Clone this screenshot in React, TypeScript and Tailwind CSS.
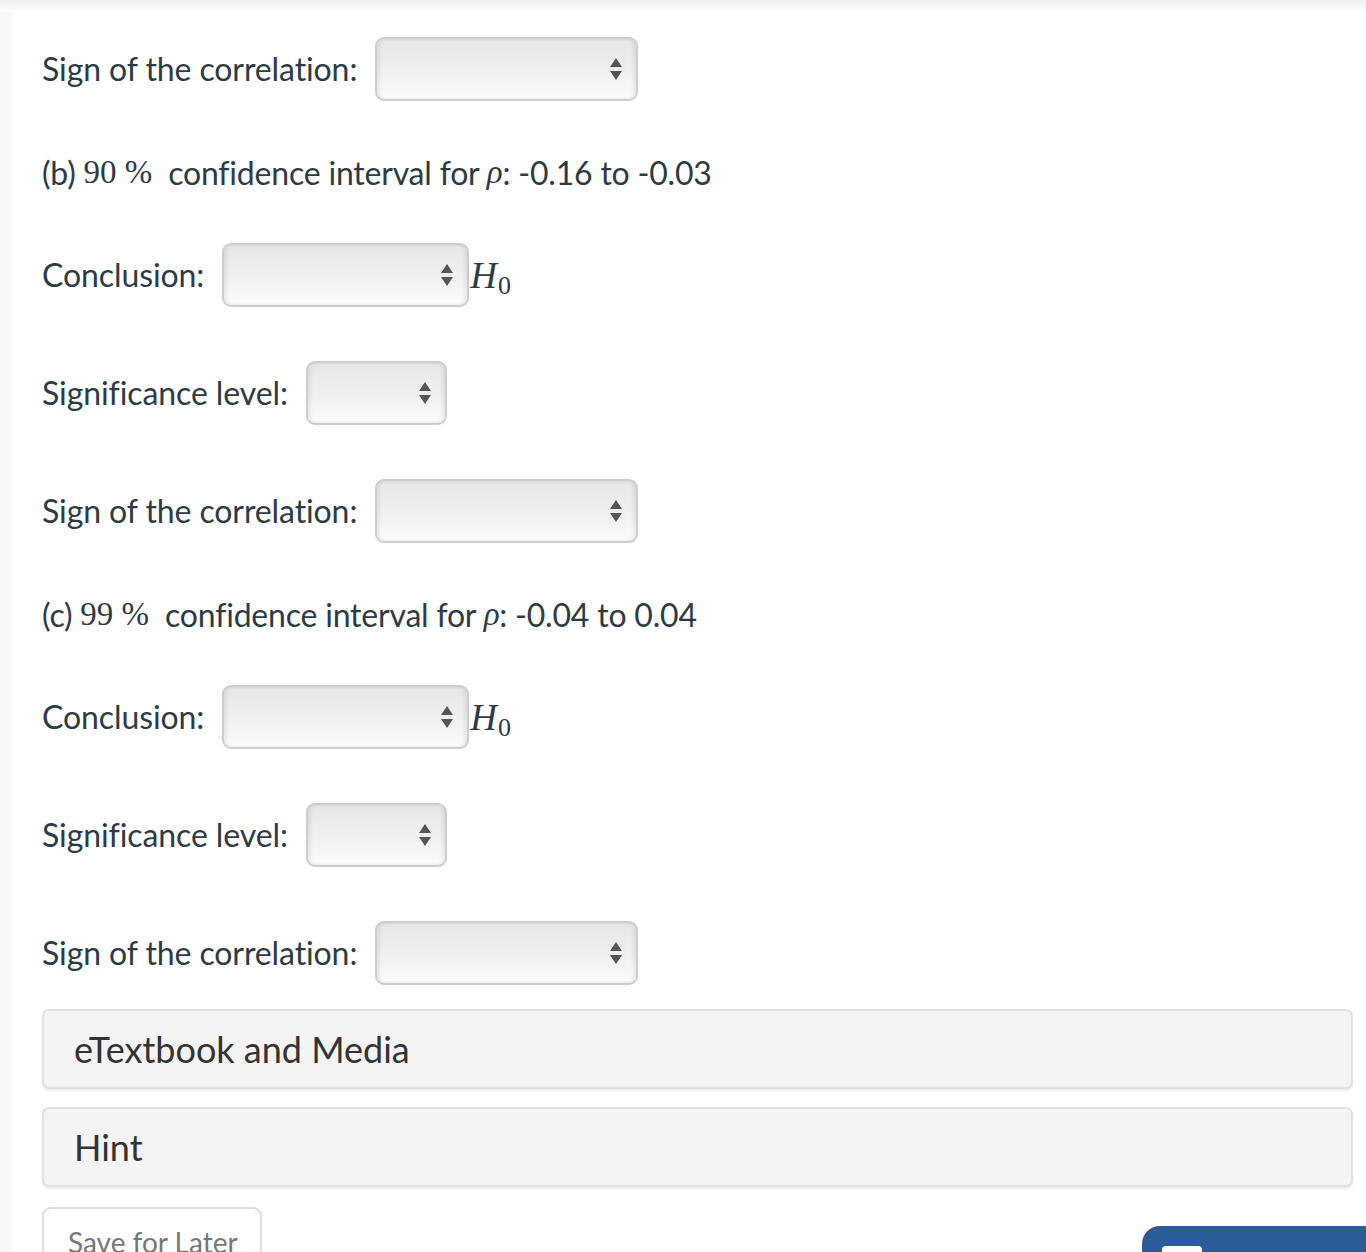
import React from 'react'

const labelFont = { fontFamily: 'Lato, "Open Sans", sans-serif' }
const mathFont = { fontFamily: '"Liberation Serif", "DejaVu Serif", serif' }

function Arrows() {
  return (
    <svg width="14" height="24" viewBox="0 0 14 24" className="shrink-0">
      <path d="M7 1 L13 10 L1 10 Z" fill="#555" />
      <path d="M1 14 L13 14 L7 23 Z" fill="#555" />
    </svg>
  )
}

function FakeSelect({ width }: { width: string }) {
  return (
    <div
      className={`${width} h-[64px] flex items-center justify-end pr-[13px] rounded-[9px] border-2 border-[#cdcdcd] bg-gradient-to-b from-[#e6e6e6] via-[#efefef] to-[#fbfbfb] shadow-[inset_3px_0_3px_rgba(0,0,0,0.06),inset_-3px_0_3px_rgba(0,0,0,0.06)]`}
    >
      <Arrows />
    </div>
  )
}

function SelectRow({ label, width, h0 = false, top }: { label: string; width: string; h0?: boolean; top: string }) {
  return (
    <div className={`flex items-center ${top}`}>
      <span className="text-[32px] leading-[48px] tracking-[-0.1px] text-[#2d3b45] mr-[18px]" style={labelFont}>
        {label}
      </span>
      <FakeSelect width={width} />
      {h0 && (
        <span className="text-[37px] italic text-[#2d3b45] ml-[1px] leading-none" style={mathFont}>
          H<span className="not-italic text-[26px] relative top-[6px] ml-[1px]">0</span>
        </span>
      )}
    </div>
  )
}

function IntervalLine({ part, level, range, top }: { part: string; level: string; range: string; top: string }) {
  return (
    <div
      className={`${top} h-[48px] flex items-center text-[32px] tracking-[-0.2px] text-[#2d3b45] whitespace-pre`}
      style={labelFont}
    >
      <span>{part} </span>
      <span className="text-[33px] tracking-normal" style={mathFont}>{level} %</span>
      <span>{'  confidence interval for '}</span>
      <span className="italic text-[33px]" style={mathFont}>ρ</span>
      <span>{': ' + range}</span>
    </div>
  )
}

function Panel({ title, top }: { title: string; top: string }) {
  return (
    <div
      className={`${top} h-[80px] flex items-center pl-[30px] rounded-[7px] border-2 border-[#e0e0e0] bg-[#f4f4f4] shadow-[0_2px_2px_rgba(0,0,0,0.08)] text-[36px] text-[#333]`}
      style={labelFont}
    >
      {title}
    </div>
  )
}

export default function App() {
  return (
    <div className="h-[1252px] w-[1366px] overflow-hidden bg-white flex flex-col">
      <div className="h-[12px] shrink-0 bg-gradient-to-b from-[#efefef] to-[#fdfdfd]" />
      <div className="flex flex-1">
        <div className="w-[12px] shrink-0 bg-[#f8f8f8]" />
        <div className="flex-1 pl-[30px] pr-[13px] flex flex-col">
          <SelectRow label="Sign of the correlation:" width="w-[263px]" top="mt-[25px]" />

          <IntervalLine part="(b)" level="90" range="-0.16 to -0.03" top="mt-[48px]" />
          <SelectRow label="Conclusion:" width="w-[247px]" h0 top="mt-[46px]" />
          <SelectRow label="Significance level:" width="w-[141px]" top="mt-[54px]" />
          <SelectRow label="Sign of the correlation:" width="w-[263px]" top="mt-[54px]" />

          <IntervalLine part="(c)" level="99" range="-0.04 to 0.04" top="mt-[48px]" />
          <SelectRow label="Conclusion:" width="w-[247px]" h0 top="mt-[46px]" />
          <SelectRow label="Significance level:" width="w-[141px]" top="mt-[54px]" />
          <SelectRow label="Sign of the correlation:" width="w-[263px]" top="mt-[54px]" />

          <Panel title="eTextbook and Media" top="mt-[24px]" />
          <Panel title="Hint" top="mt-[18px]" />

          <div className="mt-[20px] flex items-start justify-between">
            <div
              className="w-[220px] h-[80px] rounded-[9px] border-2 border-[#dddddd] bg-white pl-[24px] pt-[13px] leading-[40px] text-[28px] text-[#777]"
              style={labelFont}
            >
              Save for Later
            </div>
            <div className="mt-[19px] -mr-[13px] w-[224px] h-[70px] rounded-tl-[18px] bg-[#2c5b9a] pl-[20px] pt-[20px]">
              <div className="w-[40px] h-[30px] rounded-[4px] bg-white" />
            </div>
          </div>
        </div>
      </div>
    </div>
  )
}
